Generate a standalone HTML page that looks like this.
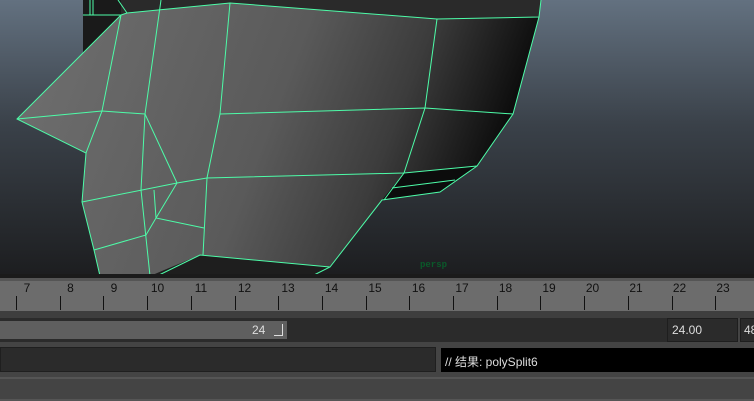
<!DOCTYPE html>
<html><head><meta charset="utf-8"><style>
*{margin:0;padding:0;box-sizing:border-box}
body{width:754px;height:401px;overflow:hidden;background:#444;font-family:"Liberation Sans","Noto Sans CJK SC",sans-serif;position:relative}
.abs{position:absolute}
.num{position:absolute;top:281px;font-size:12px;color:#111;transform:translateX(-50%)}
.tick{position:absolute;top:296px;width:1px;height:14px;background:#111}
</style></head><body>
<svg class="abs" style="left:0;top:0" width="754" height="278" viewBox="0 0 754 278">
<defs>
<linearGradient id="bg" x1="0" y1="0" x2="0" y2="1"><stop offset="0" stop-color="#637180"/><stop offset="0.45" stop-color="#3a4149"/><stop offset="1" stop-color="#1c1d1f"/></linearGradient>
<linearGradient id="face" x1="0" y1="0" x2="1" y2="0.2"><stop offset="0" stop-color="#707070"/><stop offset="0.55" stop-color="#5a5a5a"/><stop offset="0.78" stop-color="#3c3c3c"/><stop offset="1" stop-color="#0a0a0a"/></linearGradient>
</defs>
<rect width="754" height="278" fill="url(#bg)"/>
<polygon points="83,0 121,0 121,15 100,105 83,60" fill="#1a1a1a"/>
<polygon points="121,15 127,13 230,3 437,19 539,17 541,0 121,0" fill="#2a2a2a"/>
<polygon points="121,15 127,13 230,3 437,19 539,17 513,114 477,166 440,192 382,200 330,267 312,276 100,276 94,250 82,202 86,153 17,119" fill="url(#face)"/>
<polygon points="404,173 477,166 440,192 382,200" fill="#0c0c0c"/>
<polygon points="150,276 200,255 330,267 312,276" fill="#1e1e1e"/>
<g fill="none" stroke="#4dfca8" stroke-width="1">
<polyline points="83,15 121,15 127,13 230,3 437,19 539,17 541,0"/>
<line x1="93" y1="0" x2="93" y2="15"/><line x1="90" y1="0" x2="90" y2="15"/>
<polyline points="118,0 127,13"/>
<polyline points="539,17 513,114 477,166 440,192 382,200 330,267 312,276"/>
<polyline points="161,0 145,114 141,190 150,276"/>
<polyline points="230,3 220,114 207,178 203,255"/>
<polyline points="437,19 425,108 404,173 384,200"/>
<polyline points="121,15 17,119 86,153 82,202 94,250 100,276"/>
<polyline points="121,15 102,111 86,153"/>
<polyline points="17,119 102,111 145,114"/>
<polyline points="220,114 425,108 513,114"/>
<polyline points="82,202 177,183 207,178 404,173 477,166"/>
<polyline points="392,188 455,180"/>
<polyline points="145,114 177,183 156,218 146,235 94,250"/>
<polyline points="154,190 156,218 204,228"/>
<polyline points="157,276 200,255 330,267"/>
</g>
<text x="420" y="267" font-family="Liberation Mono,monospace" font-size="9" font-weight="bold" fill="#0a5a2a">persp</text>
<rect y="274" width="754" height="4" fill="#1b1b1b"/>
</svg>
<div class="abs" style="left:0;top:278px;width:754px;height:3px;background:#555"></div>
<div class="abs" style="left:0;top:281px;width:754px;height:30px;background:#6c6c6c"></div>
<div id="ruler"></div>
<div class="abs" style="left:0;top:311px;width:754px;height:7px;background:#3e3e3e"></div>
<div class="abs" style="left:0;top:318px;width:667px;height:24px;background:#2b2b2b"></div>
<div class="abs" style="left:0;top:321px;width:287px;height:18px;background:#5f5f5f"></div>
<div class="abs" style="left:252px;top:323px;font-size:12px;color:#ddd">24</div>
<div class="abs" style="left:274px;top:324px;width:9px;height:12px;border-right:1px solid #ddd;border-bottom:1px solid #ddd"></div>
<div class="abs" style="left:667px;top:318px;width:71px;height:24px;background:#2b2b2b;border:1px solid #1e1e1e"></div>
<div class="abs" style="left:672px;top:323px;font-size:12px;color:#ddd">24.00</div>
<div class="abs" style="left:740px;top:318px;width:20px;height:24px;background:#2b2b2b;border:1px solid #1e1e1e"></div>
<div class="abs" style="left:744px;top:323px;font-size:12px;color:#ddd">48</div>
<div class="abs" style="left:0;top:347px;width:436px;height:25px;background:#2b2b2b;border:1px solid #1f1f1f"></div>
<div class="abs" style="left:441px;top:348px;width:313px;height:24px;background:#000"></div>
<div class="abs" style="left:445px;top:353px;font-size:12px;color:#ddd">// 结果: polySplit6</div>
<div class="abs" style="left:0;top:377px;width:754px;height:2px;background:#555"></div>
<div class="abs" style="left:0;top:399px;width:754px;height:2px;background:#555"></div>
<script>
var r=document.getElementById('ruler'),h='';
for(var i=0;i<18;i++){var x=16+i*43.7;h+='<div class="tick" style="left:'+x+'px"></div>';}
for(var n=7;n<=23;n++){var cx=27+(n-7)*43.5;h+='<div class="num" style="left:'+cx+'px">'+n+'</div>';}
r.innerHTML=h;
</script>
</body></html>
